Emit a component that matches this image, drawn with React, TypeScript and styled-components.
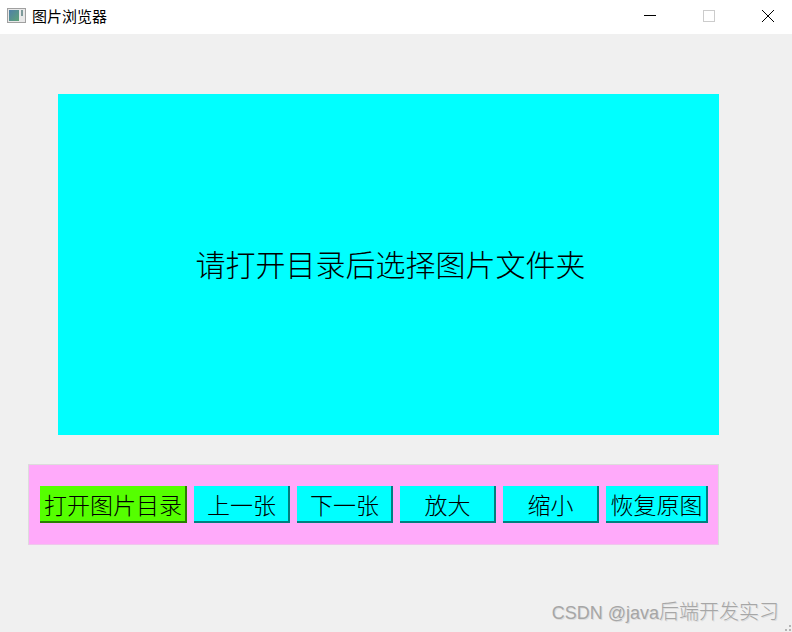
import React from 'react'
import styled, { createGlobalStyle } from 'styled-components'

const GlobalStyle = createGlobalStyle`
    html, body {
        margin: 0;
        padding: 0;
        background: #f0f0f0;
    }
    * {
        box-sizing: border-box;
    }
`

const buttons = [
    { label: '打开图片目录', width: 147, active: true },
    { label: '上一张', width: 96 },
    { label: '下一张', width: 96 },
    { label: '放大', width: 96 },
    { label: '缩小', width: 96 },
    { label: '恢复原图', width: 102 },
]

const AppIcon = () => (
    <svg width="19" height="15" viewBox="0 0 19 15">
        <defs>
            <linearGradient id="pic" x1="0" y1="0" x2="1" y2="1">
                <stop offset="0" stopColor="#4f7fa8" />
                <stop offset="1" stopColor="#5fa377" />
            </linearGradient>
        </defs>
        <rect x="0.5" y="0.5" width="18" height="14" fill="#e8e8e8" stroke="#a0a0a0" />
        <rect x="2" y="2" width="10" height="11" fill="url(#pic)" />
        <rect x="14" y="2" width="2" height="6" fill="#7d9a9a" />
    </svg>
)

const App = () => {
    return (
        <Window>
            <GlobalStyle />
            <TitleBar>
                <TitleLeft>
                    <AppIcon />
                    <Title>图片浏览器</Title>
                </TitleLeft>
                <Controls>
                    <Control>
                        <svg width="12" height="12" viewBox="0 0 12 12">
                            <path d="M0 5.5H12" stroke="#000" strokeWidth="1" />
                        </svg>
                    </Control>
                    <Control>
                        <svg width="12" height="12" viewBox="0 0 12 12">
                            <rect x="0.5" y="0.5" width="11" height="11" fill="none" stroke="#cccccc" />
                        </svg>
                    </Control>
                    <Control>
                        <svg width="14" height="14" viewBox="0 0 14 14">
                            <path d="M1 1L13 13M13 1L1 13" stroke="#000" strokeWidth="1" />
                        </svg>
                    </Control>
                </Controls>
            </TitleBar>
            <Content>
                <Display>请打开目录后选择图片文件夹</Display>
                <Toolbar>
                    {buttons.map(b => (
                        <ToolButton key={b.label} $width={b.width} $active={b.active}>
                            {b.label}
                        </ToolButton>
                    ))}
                </Toolbar>
            </Content>
            <Watermark>CSDN @java<WatermarkCjk>后端开发实习</WatermarkCjk></Watermark>
            <Grip>
                <svg width="6" height="7" viewBox="0 0 6 7">
                    <path d="M4 0h2v2H4zM0 4h2v2H0zM4 4h2v2H4z" fill="#b5b5b5" />
                </svg>
            </Grip>
        </Window>
    )
}

export default App

const Window = styled.div`
    position: relative;
    width: 792px;
    height: 632px;
    overflow: hidden;
    background: #f0f0f0;
    font-family: "Liberation Serif", "Noto Sans CJK SC", serif;
`

const TitleBar = styled.div`
    display: flex;
    justify-content: space-between;
    align-items: center;
    height: 34px;
    padding-left: 7px;
    background: #ffffff;
`

const TitleLeft = styled.div`
    display: flex;
    align-items: center;
    gap: 6px;
    margin-top: -3px;
`

const Title = styled.span`
    font-family: "Noto Sans CJK SC", sans-serif;
    font-size: 15px;
    color: #000000;
`

const Controls = styled.div`
    display: flex;
    margin-top: -3px;
    margin-right: -5px;
`

const Control = styled.div`
    display: flex;
    justify-content: center;
    align-items: center;
    width: 59px;
    height: 30px;
`

const Content = styled.div`
    display: flex;
    flex-direction: column;
    padding: 60px 0 0 28px;
`

const Display = styled.div`
    display: flex;
    justify-content: center;
    align-items: center;
    width: 661px;
    height: 341px;
    margin-left: 30px;
    padding: 0 0 4px 4px;
    background: #00ffff;
    color: #000000;
    font-family: "Noto Sans CJK SC", serif;
    font-size: 30px;
    font-weight: 300;
`

const Toolbar = styled.div`
    display: flex;
    align-items: center;
    gap: 7px;
    width: 691px;
    height: 81px;
    margin-top: 29px;
    padding-left: 11px;
    background: #ffaafa;
    border: 1px solid #dcdcdc;
    border-bottom-color: #efc6ec;
`

const ToolButton = styled.div<{ $width: number, $active?: boolean }>`
    display: flex;
    justify-content: center;
    align-items: center;
    width: ${props => props.$width}px;
    height: 37px;
    padding-left: 1px;
    background: ${props => props.$active ? '#55ff00' : '#00ffff'};
    border-right: 2px solid ${props => props.$active ? '#2a7f00' : '#007f7f'};
    border-bottom: 2px solid ${props => props.$active ? '#2a7f00' : '#007f7f'};
    color: #000000;
    font-family: "Noto Sans CJK SC", serif;
    font-size: 23px;
    font-weight: 300;
    white-space: nowrap;
`

const Watermark = styled.div`
    position: absolute;
    right: 13px;
    bottom: 8px;
    font-family: "Liberation Sans", "Noto Sans CJK SC", sans-serif;
    font-size: 18px;
    line-height: 22px;
    color: #a6a6a6;
    text-shadow: 1px 1px 0 #dcdcdc;
    white-space: nowrap;
`

const WatermarkCjk = styled.span`
    font-size: 20px;
    font-weight: 300;
`

const Grip = styled.div`
    position: absolute;
    right: 1px;
    bottom: 0;
    display: flex;
`
